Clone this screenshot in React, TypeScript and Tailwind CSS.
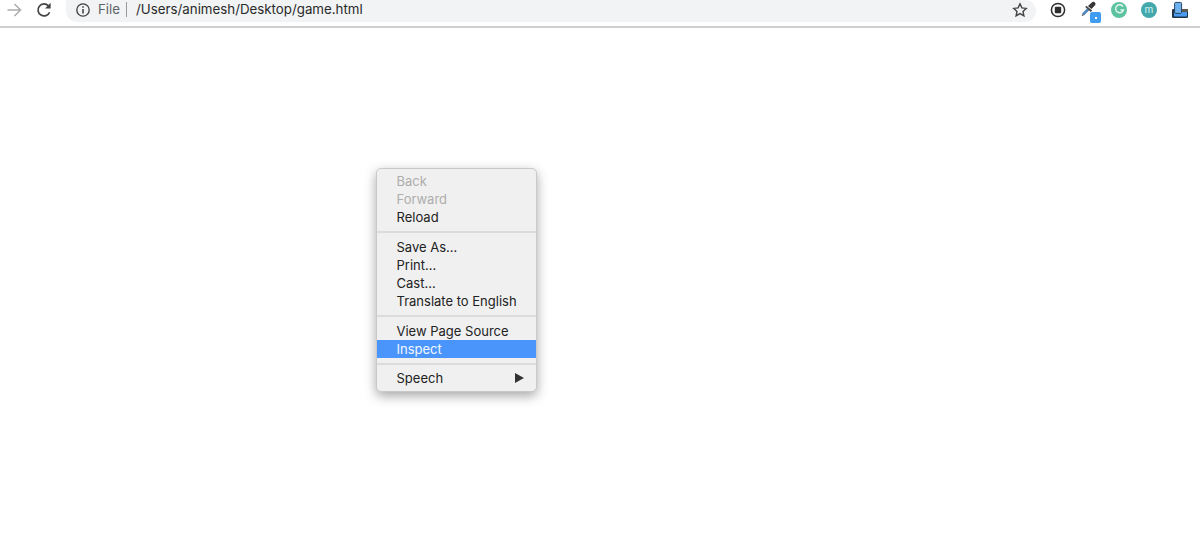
import React from "react";

const font = { fontFamily: '"Inter", "Liberation Sans", sans-serif' };

function Item({ label, disabled, active, arrow }: { label: string; disabled?: boolean; active?: boolean; arrow?: boolean }) {
  return (
    <div
      className={`flex h-[18px] items-center justify-between pl-[19.5px] pr-3 text-[13px] leading-[18px] ${
        active ? "bg-[#4a95fb] text-[#f4f8ff]" : disabled ? "text-[#adadad]" : "text-[#222222]"
      }`}
    >
      <span>{label}</span>
      {arrow && (
        <svg width="9" height="10" viewBox="0 0 9 10">
          <path d="M0 0L9 5L0 10Z" fill="#333333" />
        </svg>
      )}
    </div>
  );
}

function Sep({ className }: { className: string }) {
  return <div className={`h-[2px] bg-[#dcdcdc] ${className}`} />;
}

export default function App() {
  return (
    <div className="relative h-[540px] w-[1200px] overflow-hidden bg-white" style={font}>
      <div className="flex h-[28px] items-start border-b-2 border-[#cfcfcf] bg-white">
        <div className="flex h-[19px] w-[66px] items-center gap-[14px] pl-[6px]">
          <svg width="16" height="16" viewBox="0 0 16 16" fill="none" stroke="#adadad" strokeWidth="1.5">
            <path d="M1.5 8H14.5M8.5 2L14.5 8L8.5 14" />
          </svg>
          <svg width="16" height="16" viewBox="0 0 16 16" fill="none" stroke="#444444" strokeWidth="1.7">
            <path d="M13.6 10.2A6 6 0 1 1 12.4 3.8" />
            <path d="M14.6 0.8V6.4H9Z" fill="#444444" stroke="none" />
          </svg>
        </div>
        <div className="flex h-[22px] w-[970px] items-center rounded-r-[12px] rounded-bl-[12px] bg-[#f1f3f4] pb-[3px] pl-[10px]">
          <svg width="14" height="14" viewBox="0 0 14 14" fill="none" stroke="#3c3c3c" strokeWidth="1.3">
            <circle cx="7" cy="7" r="6.2" />
            <path d="M7 6V10.6M7 3.2V4.8" strokeWidth="1.5" />
          </svg>
          <span className="ml-[8px] text-[13.3px] text-[#5f6368]">File</span>
          <span className="ml-[6px] h-[15px] w-px bg-[#9a9a9a]" />
          <span className="ml-[9px] text-[13.3px] text-[#2a2a2a]">/Users/animesh/Desktop/game.html</span>
          <svg className="ml-auto mr-[8px]" width="16" height="16" viewBox="0 0 16 16" fill="none" stroke="#444444" strokeWidth="1.4">
            <path d="M8 1.8L9.9 5.9L14.2 6.4L11 9.4L11.9 13.8L8 11.6L4.1 13.8L5 9.4L1.8 6.4L6.1 5.9Z" />
          </svg>
        </div>
        <div className="flex h-[19px] flex-1 items-center pl-[14px]">
          <svg width="16" height="16" viewBox="0 0 16 16">
            <circle cx="8" cy="8" r="6.6" fill="none" stroke="#2e2e2e" strokeWidth="1.5" />
            <rect x="4.8" y="4.8" width="6.4" height="6.4" rx="1" fill="#2e2e2e" />
          </svg>
          <div className="relative ml-[15px] h-[19px] w-[20px]">
            <svg width="17" height="17" viewBox="0 0 17 17" className="absolute left-0 top-0">
              <path d="M2 14.6L7.4 9" stroke="#4f86c0" strokeWidth="2.8" />
              <path d="M1 15.8L2.6 14.2" stroke="#6b6b6b" strokeWidth="1.4" />
              <path d="M5.4 5.8L11.2 10.6L9.8 12L4.2 7Z" fill="#4a4a4a" />
              <path d="M7 6L10.8 2.4C12.6 0.4 15.8 3.4 14 5.2L10.4 9Z" fill="#363636" />
            </svg>
            <div className="absolute left-[9px] top-[12px] flex h-[11px] w-[11px] items-center justify-center rounded-[2px] bg-[#3f9cf0]">
              <div className="h-[2px] w-[2px] bg-white" />
            </div>
          </div>
          <div className="ml-[10px] flex h-[16px] w-[16px] items-center justify-center rounded-full bg-[#5cc29f]">
            <svg width="11" height="11" viewBox="0 0 11 11" fill="none" stroke="#e6f7f0" strokeWidth="1.4">
              <path d="M9 2.5A4 4 0 1 0 9.5 6H6.5" />
            </svg>
          </div>
          <div className="ml-[14px] flex h-[16px] w-[16px] items-center justify-center rounded-full bg-[#43a8ab] pb-[2px] text-[10px] leading-none text-[#d8f2f2]">
            m
          </div>
          <svg className="ml-[14px]" width="18" height="18" viewBox="0 0 18 18">
            <rect x="1" y="8" width="16" height="9" rx="1.2" fill="#1f3447" />
            <rect x="11" y="8" width="6" height="3" fill="#5b5a4c" />
            <rect x="3" y="11" width="13" height="4.5" fill="#4a9cf0" />
            <rect x="3.6" y="1.4" width="7" height="11" rx="1.2" fill="#6cb0ee" stroke="#2b4560" strokeWidth="1" />
          </svg>
        </div>
      </div>

      <div className="absolute left-[376px] top-[168px] w-[161px] rounded-[5px] border border-[#c9c9c9] bg-[#f0f0f0] pb-1 pt-[3px] shadow-[0_4px_12px_rgba(0,0,0,0.35)]">
        <Item label="Back" disabled />
        <Item label="Forward" disabled />
        <Item label="Reload" />
        <Sep className="mb-[5px] mt-[5px]" />
        <Item label="Save As…" />
        <Item label="Print…" />
        <Item label="Cast…" />
        <Item label="Translate to English" />
        <Sep className="mb-[5px] mt-[5px]" />
        <Item label="View Page Source" />
        <Item label="Inspect" active />
        <Sep className="mb-[4px] mt-[5px]" />
        <Item label="Speech" arrow />
      </div>
    </div>
  );
}
